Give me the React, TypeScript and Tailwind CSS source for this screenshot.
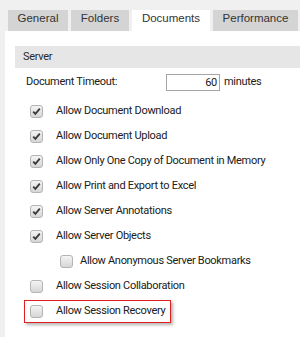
import type { ReactNode } from 'react';

const TABS = ['General', 'Folders', 'Documents', 'Performance'];
const ACTIVE_TAB = 'Documents';

// tab widths taken from the screenshot
const TAB_WIDTH: Record<string, string> = {
  General: 'w-[60px]',
  Folders: 'w-[58px]',
  Documents: 'w-[78px]',
  Performance: 'w-[85px]',
};

const OPTIONS: { label: string; checked: boolean; indent?: boolean }[] = [
  { label: 'Allow Document Download', checked: true },
  { label: 'Allow Document Upload', checked: true },
  { label: 'Allow Only One Copy of Document in Memory', checked: true },
  { label: 'Allow Print and Export to Excel', checked: true },
  { label: 'Allow Server Annotations', checked: true },
  { label: 'Allow Server Objects', checked: true },
  { label: 'Allow Anonymous Server Bookmarks', checked: false, indent: true },
  { label: 'Allow Session Collaboration', checked: false },
];

const Checkbox = ({ checked }: { checked: boolean }) => (
  <div className="w-[13px] h-[13px] rounded-[3px] border border-[#b4b4b4] bg-gradient-to-b from-[#f4f4f4] to-[#d6d6d6] flex items-center justify-center flex-shrink-0">
    {checked && (
      <svg width="9" height="9" viewBox="0 0 9 9">
        <path d="M1.2 4.6 L3.4 6.9 L7.8 1.6" fill="none" stroke="#3a3a3a" strokeWidth="1.8" />
      </svg>
    )}
  </div>
);

const Row = ({ children }: { children: ReactNode }) => (
  <div className="h-[25px] flex items-center whitespace-nowrap">{children}</div>
);

export default function App() {
  return (
    <div className="w-[300px] h-[337px] bg-[#f0f0f0] overflow-hidden pt-[10px] flex flex-col font-['Roboto',sans-serif] text-[#202020]">
      {/* tabs */}
      <div className="flex gap-[3px] pl-[8px] h-[21px] flex-shrink-0">
        {TABS.map((t) => (
          <div
            key={t}
            className={`${TAB_WIDTH[t]} h-full flex items-center justify-center pb-[3px] text-[11.5px] text-[#333] font-['Liberation_Sans',sans-serif] ${
              t === ACTIVE_TAB ? 'bg-white' : 'bg-[#d4d4d4]'
            }`}
          >
            {t}
          </div>
        ))}
      </div>

      {/* panel */}
      <div className="flex-1 ml-[5px] bg-white pt-[15px] pl-[10px] text-[11px] tracking-[-0.3px]">
        <div className="h-[22px] bg-[#e6e6e6] pl-[8px] flex items-center text-[#2a2a2a]">
          Server
        </div>

        <div className="mt-[6px] h-[16px] flex items-center whitespace-nowrap">
          <span className="ml-[11px] w-[140px]">Document Timeout:</span>
          <div className="w-[54px] h-[17px] border border-[#a6a6a6] text-right pr-[2px] leading-[15px]">60</div>
          <span className="ml-[4px]">minutes</span>
        </div>

        <div className="mt-[9px]">
          {OPTIONS.map((o) => (
            <Row key={o.label}>
              <div className={`flex items-center ${o.indent ? 'ml-[45px] gap-[7px]' : 'ml-[15px] gap-[13px]'}`}>
                <Checkbox checked={o.checked} />
                <span>{o.label}</span>
              </div>
            </Row>
          ))}
          <Row>
            <div className="ml-[9px] w-[147px] h-[23px] border border-[#e02020] shadow-[2px_2px_3px_rgba(0,0,0,0.3)] flex items-center pl-[5px] gap-[13px]">
              <Checkbox checked={false} />
              <span>Allow Session Recovery</span>
            </div>
          </Row>
        </div>
      </div>
    </div>
  );
}
